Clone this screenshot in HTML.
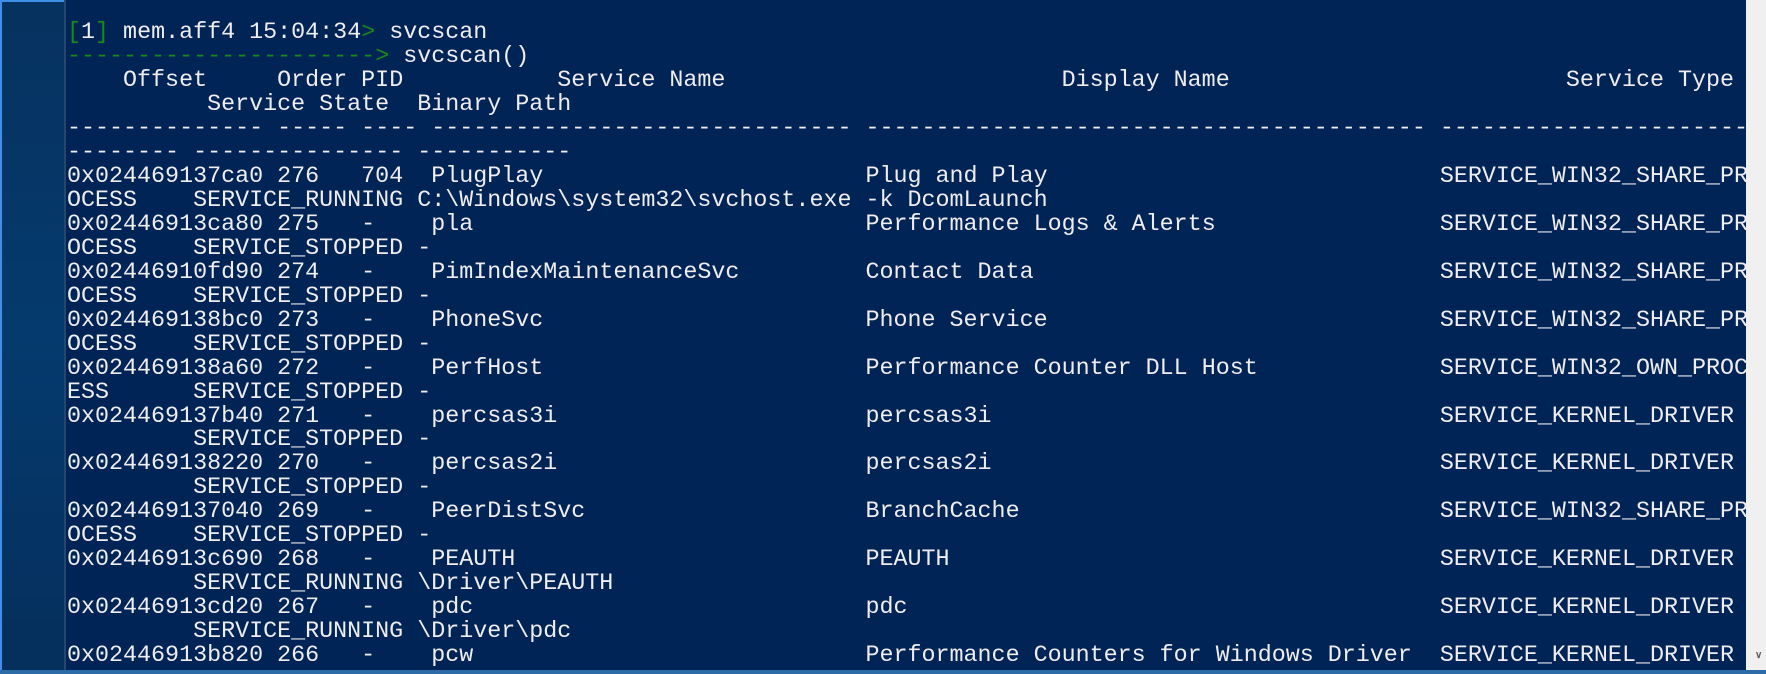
<!DOCTYPE html>
<html><head><meta charset="utf-8"><style>
html,body{margin:0;padding:0;width:1766px;height:674px;overflow:hidden;background:#012456;}
#left{position:absolute;left:0;top:0;width:64px;height:670px;background:linear-gradient(180deg,#06325f 0%,#053a6e 50%,#052f5c 100%);border-left:2px solid #3d8fe8;border-top:2px solid #3d8fe8;box-sizing:border-box;}
#sep{position:absolute;left:64px;top:0;width:2px;height:670px;background:#24476e;}
#term{position:absolute;left:66px;top:0;width:1680px;height:670px;background:#012456;overflow:hidden;}
#sb{position:absolute;left:1746px;top:0;width:20px;height:670px;background:#f0f0f0;}
#arr{position:absolute;left:1755px;top:650px;font:bold 10px "Liberation Sans",sans-serif;color:#606060;}
#bot{position:absolute;left:0;top:670px;width:1766px;height:4px;background:#2d6aa8;}
#txt{position:absolute;left:67px;top:22px;font-family:"Liberation Mono",monospace;font-size:23.35px;color:#eeedf0;}
.l{position:relative;height:23.97px;line-height:23.97px;white-space:pre;}
.l span{position:absolute;top:0;}
.g{color:#168a16;}
</style></head><body>
<div id="left"></div><div id="sep"></div><div id="term"></div><div id="sb"></div><div id="arr">&#8744;</div><div id="bot"></div>
<div id="txt">
<div class="l"><span style="left:0"><span class="g" style="position:static">[</span>1<span class="g" style="position:static">]</span> mem.aff4 15:04:34<span class="g" style="position:static">&gt;</span> svcscan</span></div>
<div class="l"><span style="left:0"><span class="g" style="position:static">----------------------&gt;</span> svcscan()</span></div>
<div class="l"><span style="left:4ch">Offset</span><span style="left:15ch">Order</span><span style="left:21ch">PID</span><span style="left:35ch">Service Name</span><span style="left:71ch">Display Name</span><span style="left:107ch">Service Type</span></div>
<div class="l"><span style="left:10ch">Service State</span><span style="left:25ch">Binary Path</span></div>
<div class="l"><span style="left:0">-------------- ----- ---- ------------------------------ ---------------------------------------- ----------------------</span></div>
<div class="l"><span style="left:0">-------- --------------- -----------</span></div>

<div class="l"><span style="left:0">0x024469137ca0</span><span style="left:15ch">276</span><span style="left:21ch">704</span><span style="left:26ch">PlugPlay</span><span style="left:57ch">Plug and Play</span><span style="left:98ch">SERVICE_WIN32_SHARE_PR</span></div>
<div class="l"><span style="left:0">OCESS</span><span style="left:9ch">SERVICE_RUNNING C:\Windows\system32\svchost.exe -k DcomLaunch</span></div>

<div class="l"><span style="left:0">0x02446913ca80</span><span style="left:15ch">275</span><span style="left:21ch">-</span><span style="left:26ch">pla</span><span style="left:57ch">Performance Logs &amp; Alerts</span><span style="left:98ch">SERVICE_WIN32_SHARE_PR</span></div>
<div class="l"><span style="left:0">OCESS</span><span style="left:9ch">SERVICE_STOPPED -</span></div>

<div class="l"><span style="left:0">0x02446910fd90</span><span style="left:15ch">274</span><span style="left:21ch">-</span><span style="left:26ch">PimIndexMaintenanceSvc</span><span style="left:57ch">Contact Data</span><span style="left:98ch">SERVICE_WIN32_SHARE_PR</span></div>
<div class="l"><span style="left:0">OCESS</span><span style="left:9ch">SERVICE_STOPPED -</span></div>

<div class="l"><span style="left:0">0x024469138bc0</span><span style="left:15ch">273</span><span style="left:21ch">-</span><span style="left:26ch">PhoneSvc</span><span style="left:57ch">Phone Service</span><span style="left:98ch">SERVICE_WIN32_SHARE_PR</span></div>
<div class="l"><span style="left:0">OCESS</span><span style="left:9ch">SERVICE_STOPPED -</span></div>

<div class="l"><span style="left:0">0x024469138a60</span><span style="left:15ch">272</span><span style="left:21ch">-</span><span style="left:26ch">PerfHost</span><span style="left:57ch">Performance Counter DLL Host</span><span style="left:98ch">SERVICE_WIN32_OWN_PROC</span></div>
<div class="l"><span style="left:0">ESS</span><span style="left:9ch">SERVICE_STOPPED -</span></div>

<div class="l"><span style="left:0">0x024469137b40</span><span style="left:15ch">271</span><span style="left:21ch">-</span><span style="left:26ch">percsas3i</span><span style="left:57ch">percsas3i</span><span style="left:98ch">SERVICE_KERNEL_DRIVER</span></div>
<div class="l"><span style="left:9ch">SERVICE_STOPPED -</span></div>

<div class="l"><span style="left:0">0x024469138220</span><span style="left:15ch">270</span><span style="left:21ch">-</span><span style="left:26ch">percsas2i</span><span style="left:57ch">percsas2i</span><span style="left:98ch">SERVICE_KERNEL_DRIVER</span></div>
<div class="l"><span style="left:9ch">SERVICE_STOPPED -</span></div>

<div class="l"><span style="left:0">0x024469137040</span><span style="left:15ch">269</span><span style="left:21ch">-</span><span style="left:26ch">PeerDistSvc</span><span style="left:57ch">BranchCache</span><span style="left:98ch">SERVICE_WIN32_SHARE_PR</span></div>
<div class="l"><span style="left:0">OCESS</span><span style="left:9ch">SERVICE_STOPPED -</span></div>

<div class="l"><span style="left:0">0x02446913c690</span><span style="left:15ch">268</span><span style="left:21ch">-</span><span style="left:26ch">PEAUTH</span><span style="left:57ch">PEAUTH</span><span style="left:98ch">SERVICE_KERNEL_DRIVER</span></div>
<div class="l"><span style="left:9ch">SERVICE_RUNNING \Driver\PEAUTH</span></div>

<div class="l"><span style="left:0">0x02446913cd20</span><span style="left:15ch">267</span><span style="left:21ch">-</span><span style="left:26ch">pdc</span><span style="left:57ch">pdc</span><span style="left:98ch">SERVICE_KERNEL_DRIVER</span></div>
<div class="l"><span style="left:9ch">SERVICE_RUNNING \Driver\pdc</span></div>

<div class="l"><span style="left:0">0x02446913b820</span><span style="left:15ch">266</span><span style="left:21ch">-</span><span style="left:26ch">pcw</span><span style="left:57ch">Performance Counters for Windows Driver</span><span style="left:98ch">SERVICE_KERNEL_DRIVER</span></div>
</div>
</body></html>
